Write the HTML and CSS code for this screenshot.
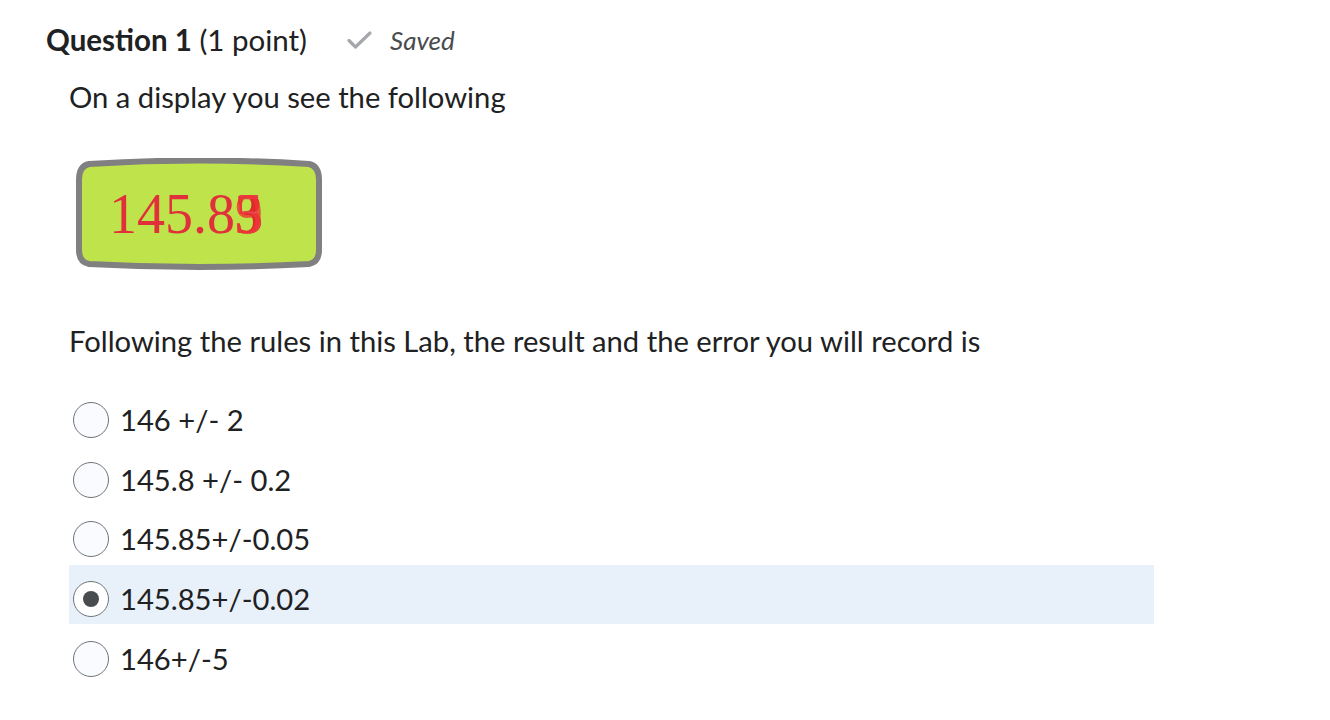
FILE: index.html
```html
<!DOCTYPE html>
<html>
<head>
<meta charset="utf-8">
<link rel="stylesheet" href="styles.css">
</head>
<body>
<div class="question">
  <div class="q-head">
    <h2 class="q-title"><span class="q-num">Question 1</span> (1 point)</h2>
    <span class="saved">
      <svg class="check" width="30" height="20" viewBox="0 0 30 20"><path d="M4 10.5 L10.5 17 L25 3" fill="none" stroke="#a4a8ac" stroke-width="3.2" stroke-linecap="round" stroke-linejoin="round"/></svg>
      <span class="saved-text">Saved</span>
    </span>
  </div>
  <div class="q-body">
    <p class="prompt">On a display you see the following</p>
    <div class="display">
      <svg class="display-frame" width="248" height="112" viewBox="0 0 248 112">
        <path d="M14 6 Q124 -1 234 6 Q244 8 244 22 L244 92 Q244 104 234 106 Q124 112 14 106 Q4 104 4 92 L4 22 Q4 8 14 6 Z" fill="#bfe34b" stroke="#808080" stroke-width="6"/>
      </svg>
      <div class="display-text">145.8<span class="glitch"><span class="g1">3</span><span class="g2">5</span><span class="g3">9</span></span></div>
    </div>
    <p class="prompt second">Following the rules in this Lab, the result and the error you will record is</p>
    <ul class="options">
      <li class="option"><span class="radio"></span><span class="label">146 +/- 2</span></li>
      <li class="option"><span class="radio"></span><span class="label">145.8 +/- 0.2</span></li>
      <li class="option"><span class="radio"></span><span class="label">145.85+/-0.05</span></li>
      <li class="option selected"><span class="radio checked"></span><span class="label">145.85+/-0.02</span></li>
      <li class="option"><span class="radio"></span><span class="label">146+/-5</span></li>
    </ul>
  </div>
</div>
</body>
</html>
```

FILE: styles.css
```css
html, body {
  margin: 0;
  padding: 0;
  background: #ffffff;
}
body {
  font-family: Lato, "Noto Sans", sans-serif;
  color: #202122;
}
.question {
  padding: 21px 0 0 46px;
}
.q-head {
  display: flex;
  align-items: center;
  height: 38px;
}
.q-title {
  margin: 0;
  font-size: 29.5px;
  font-weight: 400;
  line-height: 38px;
}
.q-num {
  font-weight: 700;
}
.saved {
  display: flex;
  align-items: center;
  margin-left: 38px;
  color: #494c4e;
}
.check {
  margin-right: 15px;
}
.saved-text {
  font-style: italic;
  font-size: 26px;
}
.q-body {
  padding-left: 23px;
}
.prompt {
  margin: 0;
  font-size: 29.2px;
  line-height: 38px;
}
.q-body > .prompt:first-child {
  margin-top: 19px;
}
.display {
  position: relative;
  width: 248px;
  height: 112px;
  margin: 42px 0 0 6px;
}
.display-frame {
  display: block;
}
.display-text {
  position: absolute;
  left: 34px;
  top: 24px;
  font-family: "Liberation Serif", serif;
  font-size: 56px;
  line-height: 64px;
  color: #e0303a;
}
.glitch {
  position: relative;
  display: inline-block;
  width: 30px;
  height: 64px;
  vertical-align: top;
}
.glitch span {
  position: absolute;
  left: 0;
  top: 0;
}
.g1 { color: #e02a2a; font-weight: 700; }
.g2 { color: #e8404a; left: 2px; }
.g3 { color: #e33; opacity: 0.8; left: 1px; }
.second {
  margin-top: 52px;
}
.options {
  list-style: none;
  margin: 26px 0 0 0;
  padding: 0;
  width: 1085px;
}
.option {
  box-sizing: border-box;
  display: flex;
  align-items: center;
  height: 59.6px;
  padding: 9px 0 0 4px;
}
.option.selected {
  background: #e8f0fa;
}
.radio {
  box-sizing: border-box;
  width: 36px;
  height: 36px;
  border: 1.5px solid #6e7376;
  border-radius: 50%;
  background: #f9fbff;
  margin-right: 11px;
  position: relative;
}
.radio.checked {
  background: #ffffff;
}
.radio.checked::after {
  content: "";
  position: absolute;
  left: 8.5px;
  top: 8.5px;
  width: 16px;
  height: 16px;
  border-radius: 50%;
  background: #494c4e;
}
.label {
  font-size: 29.2px;
  line-height: 38px;
}
```
